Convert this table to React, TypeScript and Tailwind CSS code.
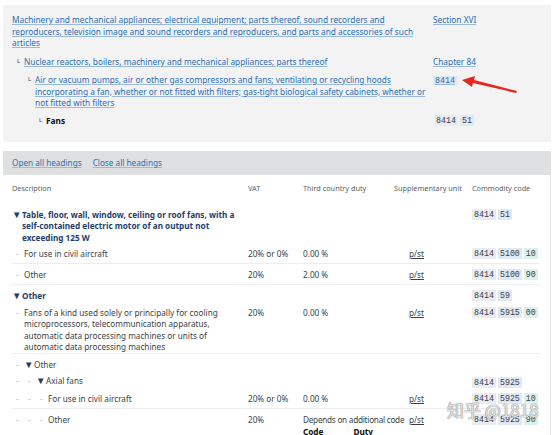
import React from 'react';

const font = { fontFamily: '"Noto Sans", "Liberation Sans", sans-serif' };

type Seg = { text: string; kind: 'a' | 'b' | 'c' };

const segBg: Record<Seg['kind'], string> = {
  a: 'bg-[#e8ebf1]',
  b: 'bg-[#dde9f5]',
  c: 'bg-[#daf1ec]',
};

const Code = ({ parts }: { parts: string[] }) => {
  const kinds: Seg['kind'][] = ['a', 'b', 'c'];
  return (
    <div className="flex gap-[2px] font-['Liberation_Mono',monospace] text-[8.3px] leading-[11px] text-[#3d4045]">
      {parts.map((p, i) => (
        <span key={i} className={`${segBg[kinds[i]]} px-[2px]`}>
          {p}
        </span>
      ))}
    </div>
  );
};

const Dashes = ({ n }: { n: number }) => (
  <>
    {Array.from({ length: n }).map((_, i) => (
      <span key={i} className={`${i === n - 1 ? 'w-[8px]' : 'w-[12px]'} shrink-0 text-[#b4b7ba]`}>
        -
      </span>
    ))}
  </>
);

const Tri = () => <span className="w-[10px] shrink-0 text-[9.5px] leading-[11px] text-[#1e3d6b]">▼</span>;

type Row = {
  depth: number;
  desc: React.ReactNode;
  heading?: boolean;
  bold?: boolean;
  vat?: string;
  duty?: React.ReactNode;
  unit?: boolean;
  code?: string[];
  leaf?: boolean;
  codeDrop?: boolean;
};

const rows: Row[] = [
  {
    depth: 0,
    heading: true,
    bold: true,
    desc: 'Table, floor, wall, window, ceiling or roof fans, with a self-contained electric motor of an output not exceeding 125 W',
    code: ['8414', '51'],
  },
  { depth: 1, desc: 'For use in civil aircraft', vat: '20% or 0%', duty: '0.00 %', unit: true, code: ['8414', '5100', '10'], leaf: true },
  { depth: 1, desc: 'Other', vat: '20%', duty: '2.00 %', unit: true, code: ['8414', '5100', '90'], leaf: true },
  { depth: 0, heading: true, bold: true, desc: 'Other', code: ['8414', '59'] },
  {
    depth: 1,
    desc: 'Fans of a kind used solely or principally for cooling microprocessors, telecommunication apparatus, automatic data processing machines or units of automatic data processing machines',
    vat: '20%',
    duty: '0.00 %',
    unit: true,
    code: ['8414', '5915', '00'],
    leaf: true,
  },
  { depth: 1, heading: true, desc: 'Other' },
  { depth: 2, heading: true, desc: 'Axial fans', code: ['8414', '5925'], codeDrop: true },
  { depth: 3, desc: 'For use in civil aircraft', vat: '20% or 0%', duty: '0.00 %', unit: true, code: ['8414', '5925', '10'], leaf: true },
  {
    depth: 3,
    desc: 'Other',
    vat: '20%',
    duty: (
      <div className="whitespace-nowrap">
        <div className="tracking-[-0.25px]">Depends on additional code</div>
        <div className="flex gap-[30px] font-bold text-[#0b0c0c]">
          <span>Code</span>
          <span>Duty</span>
        </div>
      </div>
    ),
    unit: true,
    code: ['8414', '5925', '90'],
    leaf: true,
  },
];

const cols = 'grid grid-cols-[236px_55px_91px_78px_1fr]';

const TableRow = ({ r }: { r: Row }) => (
  <div className={`${cols} pt-[5px] ${r.leaf ? 'min-h-[21px] border-b border-[#ecedee]' : ''}`}>
    <div className={`flex ${r.depth === 0 ? '' : 'pl-[4px]'}`}>
      {r.depth > 0 && <Dashes n={r.depth} />}
      <div className={`flex ${r.bold ? 'pr-[6px] font-bold text-[#1e3d6b]' : 'pr-[16px] text-[#3b3f44]'}`}>
        {r.heading && <Tri />}
        <span>{r.desc}</span>
      </div>
    </div>
    <div className="text-[#3b3f44]">{r.vat}</div>
    <div className="text-[#3b3f44]">{r.duty}</div>
    <div className="pl-[15px]">
      {r.unit && <span className="text-[#3b3f44] underline">p/st</span>}
    </div>
    <div className={r.codeDrop ? 'pt-[2px]' : ''}>{r.code && <Code parts={r.code} />}</div>
  </div>
);

const Ell = () => <span className="w-[12px] shrink-0 pl-[5px] text-[6px] text-[#3b3f44]">L</span>;

export default function App() {
  return (
    <div className="relative h-[435px] w-[554px] overflow-hidden bg-white text-[8.2px] leading-[11.5px]" style={font}>
      {/* breadcrumb box */}
      <div className="mx-[3px] mt-[5px] h-[137px] bg-[#f3f3f3] pl-[9px] pr-[10px] pt-[9px] text-[8.3px] leading-[11.7px]">
        <div className="grid grid-cols-[418px_1fr] gap-x-[3px] gap-y-[6px] text-[#2c6db3]">
          <a className="underline decoration-[#9bb9da]">
            Machinery and mechanical appliances; electrical equipment; parts thereof, sound recorders and reproducers,
            television image and sound recorders and reproducers, and parts and accessories of such articles
          </a>
          <a className="underline decoration-[#9bb9da]">Section XVI</a>

          <div className="flex pt-[1px]">
            <Ell />
            <a className="underline decoration-[#9bb9da]">
              Nuclear reactors, boilers, machinery and mechanical appliances; parts thereof
            </a>
          </div>
          <a className="pt-[1px] underline decoration-[#9bb9da]">Chapter 84</a>

          <div className="flex pl-[11px]">
            <Ell />
            <a className="underline decoration-[#9bb9da]">
              Air or vacuum pumps, air or other gas compressors and fans; ventilating or recycling hoods incorporating a
              fan, whether or not fitted with filters; gas-tight biological safety cabinets, whether or not fitted with
              filters
            </a>
          </div>
          <div>
            <a className="bg-[#dbe6f2] px-[2px] font-['Liberation_Mono',monospace] text-[8.3px] underline decoration-[#9bb9da]">
              8414
            </a>
          </div>

          <div className="flex pl-[22px]">
            <Ell />
            <span className="font-bold text-[#0b0c0c]">Fans</span>
          </div>
          <div className="pl-[1px]">
            <Code parts={['8414', '51']} />
          </div>
        </div>
      </div>

      {/* table */}
      <div className="mx-[3px] mt-[9px] border-r border-[#e2e2e2]">
        <div className="flex h-[24px] items-center gap-[11px] bg-[#dee0e2] px-[9px] text-[#2c6db3]">
          <a className="underline decoration-[#9bb9da]">Open all headings</a>
          <a className="underline decoration-[#9bb9da]">Close all headings</a>
        </div>
        <div className="pl-[9px] pr-[10px]">
          <div className={`${cols} pb-[9px] pt-[8px] text-[7.3px] text-[#5a5f63]`}>
            <div>Description</div>
            <div>VAT</div>
            <div>Third country duty</div>
            <div>Supplementary unit</div>
            <div>Commodity code</div>
          </div>
          {rows.map((r, i) => (
            <TableRow key={i} r={r} />
          ))}
        </div>
      </div>

      {/* annotation arrow */}
      <svg className="absolute left-[455px] top-[70px]" width="70" height="30" viewBox="0 0 70 30">
        <polygon points="7,10 20,6 19,10 62,21 61,23 18,13 17,17" fill="#e4281f" />
      </svg>

      {/* watermark */}
      <div
        className="absolute left-[447px] top-[400px] text-[17px] leading-[20px] text-white/80 [text-shadow:0_0_1px_#777,0_0_1px_#777]"
        style={{ fontFamily: '"Noto Sans CJK SC", sans-serif' }}
      >
        知乎 @1818
      </div>
    </div>
  );
}
